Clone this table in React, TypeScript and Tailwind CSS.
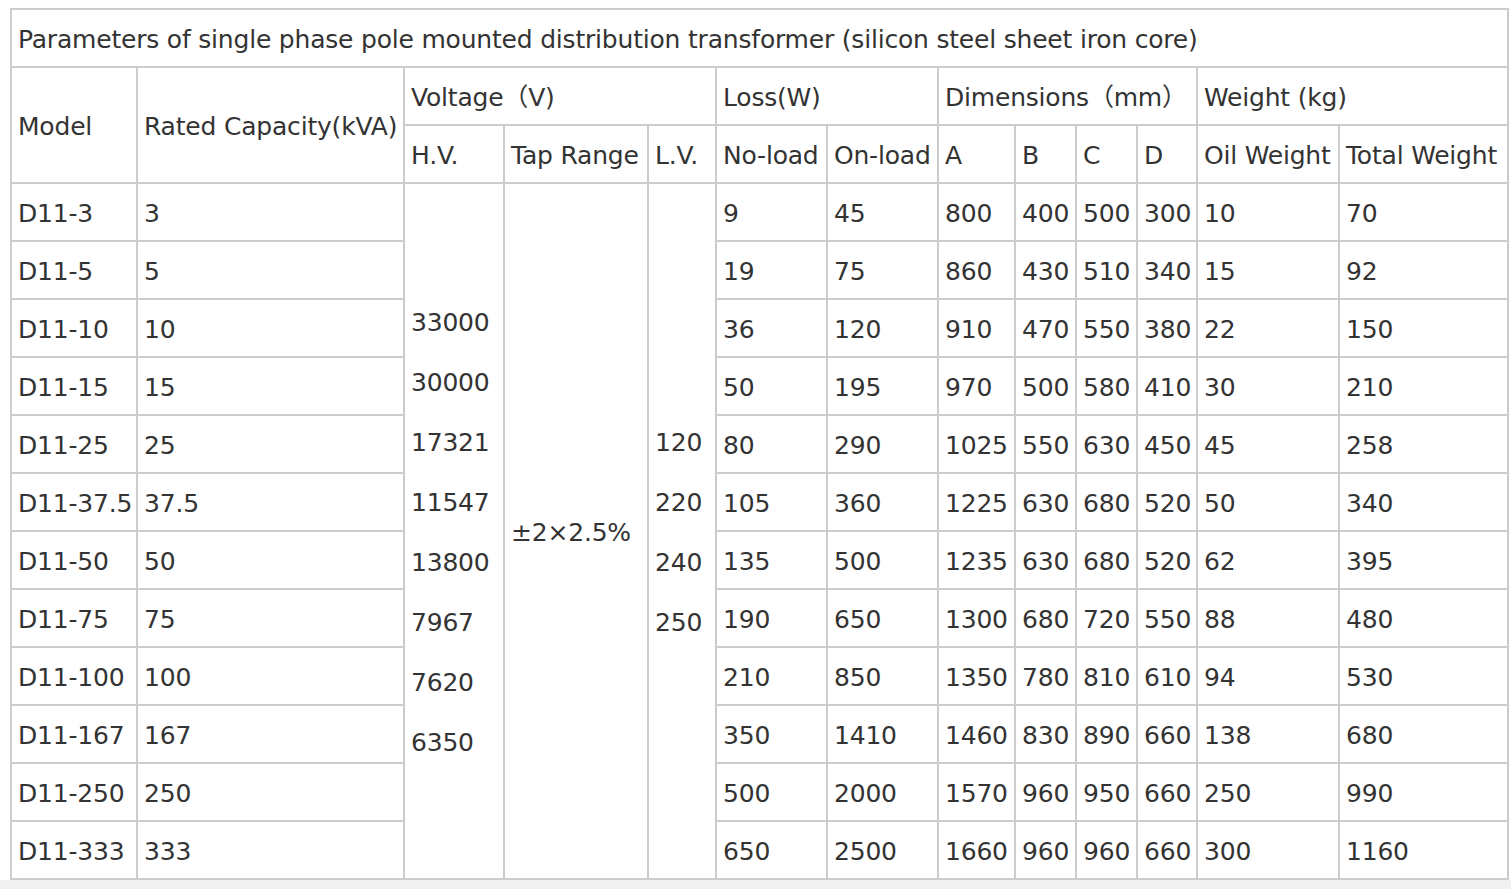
const rows: string[][] = [
  ["D11-3", "3", "9", "45", "800", "400", "500", "300", "10", "70"],
  ["D11-5", "5", "19", "75", "860", "430", "510", "340", "15", "92"],
  ["D11-10", "10", "36", "120", "910", "470", "550", "380", "22", "150"],
  ["D11-15", "15", "50", "195", "970", "500", "580", "410", "30", "210"],
  ["D11-25", "25", "80", "290", "1025", "550", "630", "450", "45", "258"],
  ["D11-37.5", "37.5", "105", "360", "1225", "630", "680", "520", "50", "340"],
  ["D11-50", "50", "135", "500", "1235", "630", "680", "520", "62", "395"],
  ["D11-75", "75", "190", "650", "1300", "680", "720", "550", "88", "480"],
  ["D11-100", "100", "210", "850", "1350", "780", "810", "610", "94", "530"],
  ["D11-167", "167", "350", "1410", "1460", "830", "890", "660", "138", "680"],
  ["D11-250", "250", "500", "2000", "1570", "960", "950", "660", "250", "990"],
  ["D11-333", "333", "650", "2500", "1660", "960", "960", "660", "300", "1160"],
];

const hv = ["33000", "30000", "17321", "11547", "13800", "7967", "7620", "6350"];
const lv = ["120", "220", "240", "250"];

const widths = [126, 267, 100, 144, 68, 111, 111, 77, 61, 61, 60, 142, 169];

const cell = "border-2 border-[#cccccc] px-[6px] pt-[3px] text-left align-middle font-normal whitespace-nowrap";

export default function App() {
  return (
    <div className="min-h-screen bg-[#f0f0f0]" style={{ fontFamily: '"DejaVu Sans", "Noto Sans CJK SC", sans-serif' }}>
      <div className="bg-white pl-[10px] pt-[8px]">
        <table className="table-fixed border-collapse w-[1497px] text-[25px] tracking-[-0.2px] text-[#333333] leading-none">
          <colgroup>
            {widths.map((w, i) => (
              <col key={i} style={{ width: w }} />
            ))}
          </colgroup>
          <tbody>
            <tr className="h-[58px]">
              <td colSpan={13} className={cell}>
                Parameters of single phase pole mounted distribution transformer (silicon steel sheet iron core)
              </td>
            </tr>
            <tr className="h-[58px]">
              <td rowSpan={2} className={cell}>Model</td>
              <td rowSpan={2} className={cell}>Rated Capacity(kVA)</td>
              <td colSpan={3} className={cell}>Voltage（V)</td>
              <td colSpan={2} className={cell}>Loss(W)</td>
              <td colSpan={4} className={cell}>Dimensions（mm）</td>
              <td colSpan={2} className={cell}>Weight (kg)</td>
            </tr>
            <tr className="h-[58px]">
              <td className={cell}>H.V.</td>
              <td className={cell}>Tap Range</td>
              <td className={cell}>L.V.</td>
              <td className={cell}>No-load</td>
              <td className={cell}>On-load</td>
              <td className={cell}>A</td>
              <td className={cell}>B</td>
              <td className={cell}>C</td>
              <td className={cell}>D</td>
              <td className={cell}>Oil Weight</td>
              <td className={cell}>Total Weight</td>
            </tr>
            {rows.map((r, i) => (
              <tr key={r[0]} className="h-[58px]">
                <td className={cell}>{r[0]}</td>
                <td className={cell}>{r[1]}</td>
                {i === 0 && (
                  <>
                    <td rowSpan={12} className={cell}>
                      <div className="flex flex-col">
                        {hv.map((v) => (
                          <span key={v} className="leading-[60px]">{v}</span>
                        ))}
                      </div>
                    </td>
                    <td rowSpan={12} className={cell}>±2×2.5%</td>
                    <td rowSpan={12} className={cell}>
                      <div className="flex flex-col">
                        {lv.map((v) => (
                          <span key={v} className="leading-[60px]">{v}</span>
                        ))}
                      </div>
                    </td>
                  </>
                )}
                {r.slice(2).map((v, j) => (
                  <td key={j} className={cell}>{v}</td>
                ))}
              </tr>
            ))}
          </tbody>
        </table>
      </div>
    </div>
  );
}
